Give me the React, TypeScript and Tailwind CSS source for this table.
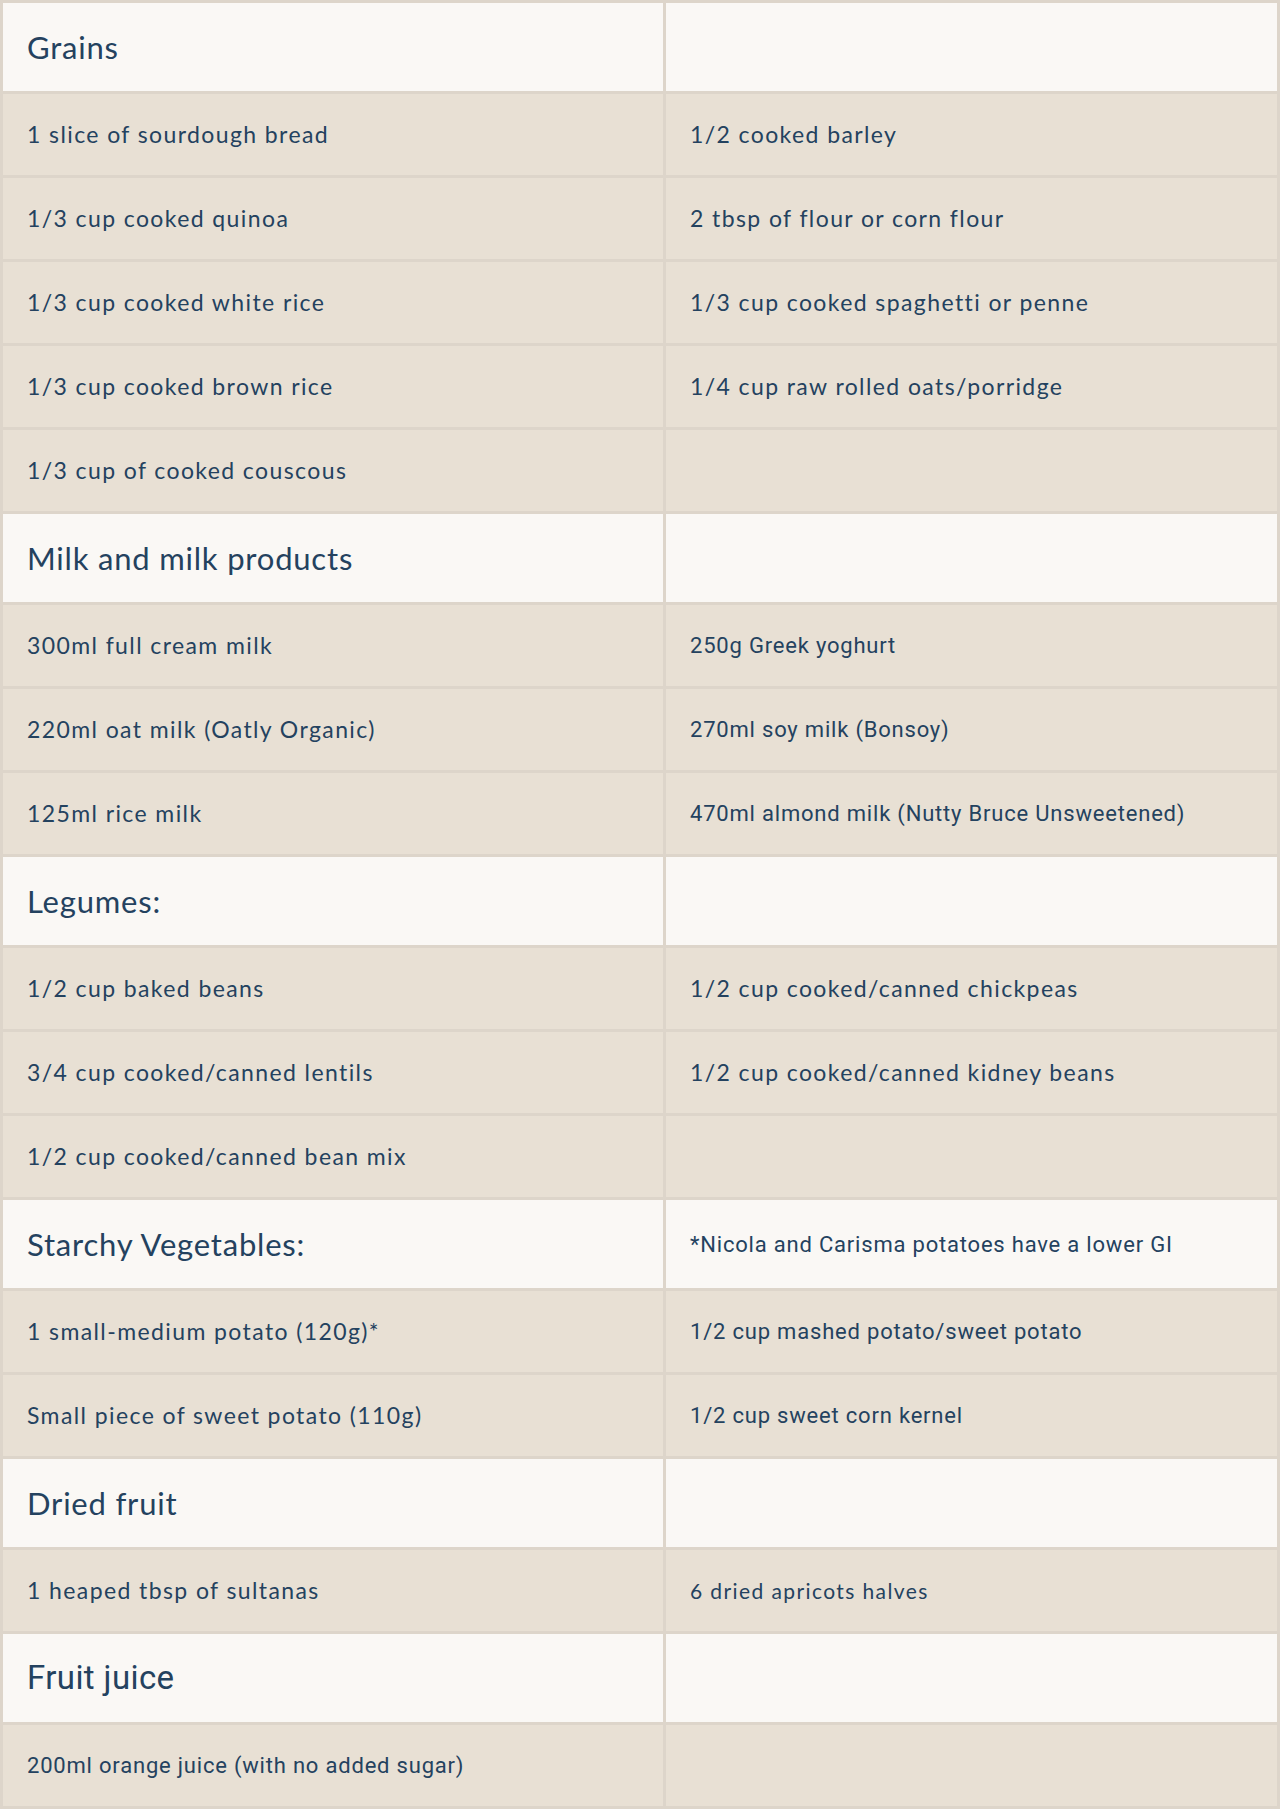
type Cell = { text: string; kind?: 'wide' | 'narrow' | 'small' };

type Section = {
  title: Cell;
  note?: Cell;
  rows: [Cell, Cell?][];
};

const w = (text: string): Cell => ({ text, kind: 'wide' });
const n = (text: string): Cell => ({ text, kind: 'narrow' });
const s = (text: string): Cell => ({ text, kind: 'small' });

const sections: Section[] = [
  {
    title: w('Grains'),
    rows: [
      [w('1 slice of sourdough bread'), w('1/2 cooked barley')],
      [w('1/3 cup cooked quinoa'), w('2 tbsp of flour or corn flour')],
      [w('1/3 cup cooked white rice'), w('1/3 cup cooked spaghetti or penne')],
      [w('1/3 cup cooked brown rice'), w('1/4 cup raw rolled oats/porridge')],
      [w('1/3 cup of cooked couscous')],
    ],
  },
  {
    title: w('Milk and milk products'),
    rows: [
      [w('300ml full cream milk'), n('250g Greek yoghurt')],
      [w('220ml oat milk (Oatly Organic)'), n('270ml soy milk (Bonsoy)')],
      [w('125ml rice milk'), n('470ml almond milk (Nutty Bruce Unsweetened)')],
    ],
  },
  {
    title: w('Legumes:'),
    rows: [
      [w('1/2 cup baked beans'), w('1/2 cup cooked/canned chickpeas')],
      [w('3/4 cup cooked/canned lentils'), w('1/2 cup cooked/canned kidney beans')],
      [w('1/2 cup cooked/canned bean mix')],
    ],
  },
  {
    title: w('Starchy Vegetables:'),
    note: n('*Nicola and Carisma potatoes have a lower GI'),
    rows: [
      [w('1 small-medium potato (120g)*'), n('1/2 cup mashed potato/sweet potato')],
      [w('Small piece of sweet potato (110g)'), n('1/2 cup sweet corn kernel')],
    ],
  },
  {
    title: w('Dried fruit'),
    rows: [[w('1 heaped tbsp of sultanas'), s('6 dried apricots halves')]],
  },
  {
    title: n('Fruit juice'),
    rows: [[n('200ml orange juice (with no added sugar)')]],
  },
];

function CellText({ cell, head }: { cell?: Cell; head?: boolean }) {
  if (!cell) return null;
  if (head && cell.kind === 'wide') {
    return <span className="font-['Lato',sans-serif] text-[31px] tracking-[0.8px]">{cell.text}</span>;
  }
  if (head && cell.kind === 'narrow') {
    return <span className="font-['Roboto',sans-serif] text-[33px] tracking-[0.4px]">{cell.text}</span>;
  }
  if (cell.kind === 'narrow') {
    return <span className="font-['Roboto',sans-serif] text-[22px] tracking-[0.8px]">{cell.text}</span>;
  }
  if (cell.kind === 'small') {
    return <span className="font-['Lato',sans-serif] text-[21px] tracking-[1.4px]">{cell.text}</span>;
  }
  return <span className="font-['Lato',sans-serif] text-[23px] tracking-[1.4px]">{cell.text}</span>;
}

export default function App() {
  return (
    <div className="w-[1280px] bg-[#ddd5ca] p-[3px] text-[#24425f]">
      <div className="grid grid-cols-[660px_611px] gap-[3px]">
        {sections.map(sec => (
          <>
            <div key={sec.title.text} className="h-[88px] bg-[#faf8f5] flex items-center pl-6">
              <CellText cell={sec.title} head />
            </div>
            <div key={sec.title.text + '-note'} className="h-[88px] bg-[#faf8f5] flex items-center pl-6">
              <CellText cell={sec.note} />
            </div>
            {sec.rows.map(([l, r], i) => (
              <>
                <div key={sec.title.text + 'l' + i} className="h-[81px] bg-[#e8e0d4] flex items-center pl-6">
                  <CellText cell={l} />
                </div>
                <div key={sec.title.text + 'r' + i} className="h-[81px] bg-[#e8e0d4] flex items-center pl-6">
                  <CellText cell={r} />
                </div>
              </>
            ))}
          </>
        ))}
      </div>
    </div>
  );
}
